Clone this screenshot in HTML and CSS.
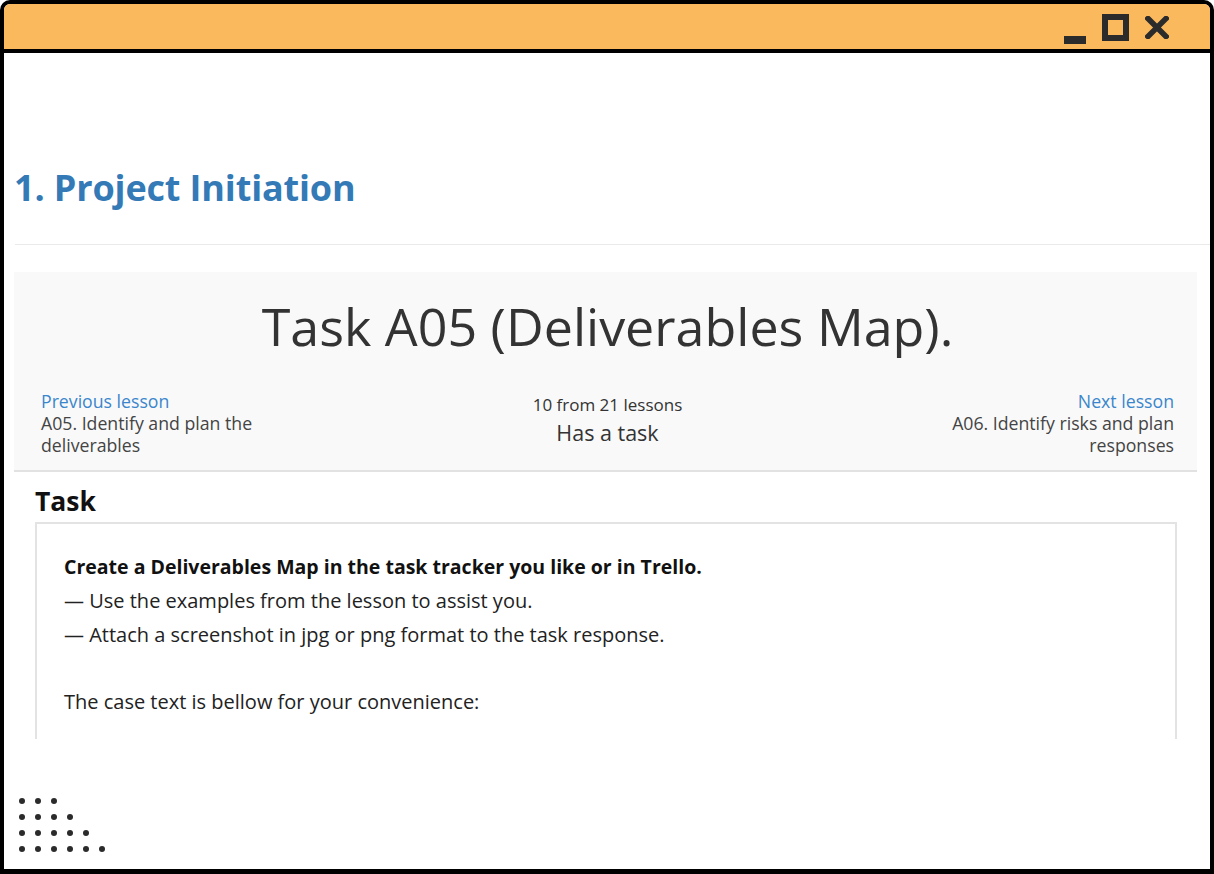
FILE: index.html
```html
<!DOCTYPE html>
<html>
<head>
<meta charset="utf-8">
<link rel="stylesheet" href="styles.css">
</head>
<body>
<div class="window">
  <div class="titlebar">
    <div class="controls">
      <span class="ctl-min"></span>
      <span class="ctl-max"></span>
      <svg class="ctl-close" width="24" height="23" viewBox="0 0 24 23"><path d="M3 2.5 L21 20.5 M21 2.5 L3 20.5" stroke="#2b2b2b" stroke-width="5.5" stroke-linecap="square"/></svg>
    </div>
  </div>
  <div class="content">
    <h1 class="module-title">1. Project Initiation</h1>
    <div class="divider"></div>
    <div class="lesson-panel">
      <h2 class="lesson-title">Task A05 (Deliverables Map).</h2>
      <div class="lesson-nav">
        <div class="nav-side nav-prev">
          <a class="nav-link">Previous lesson</a>
          <div class="nav-name">A05. Identify and plan the deliverables</div>
        </div>
        <div class="nav-center">
          <div class="nav-count">10 from 21 lessons</div>
          <div class="nav-has">Has a task</div>
        </div>
        <div class="nav-side nav-next">
          <a class="nav-link">Next lesson</a>
          <div class="nav-name">A06. Identify risks and plan responses</div>
        </div>
      </div>
    </div>
    <div class="task-section">
      <h3 class="task-heading">Task</h3>
      <div class="task-box">
        <p class="task-strong">Create a Deliverables Map in the task tracker you like or in Trello.</p>
        <p class="task-line">— Use the examples from the lesson to assist you.</p>
        <p class="task-line">— Attach a screenshot in jpg or png format to the task response.</p>
        <p class="task-line task-gap">The case text is bellow for your convenience:</p>
      </div>
    </div>
  </div>
  <div class="footer">
    <div class="dots">
      <div class="dot-row"><i></i><i></i><i></i></div>
      <div class="dot-row"><i></i><i></i><i></i><i></i></div>
      <div class="dot-row"><i></i><i></i><i></i><i></i><i></i></div>
      <div class="dot-row"><i></i><i></i><i></i><i></i><i></i><i></i></div>
    </div>
  </div>
</div>
</body>
</html>
```

FILE: styles.css
```css
* { box-sizing: border-box; }
html, body { margin: 0; padding: 0; background: #fff; }
body { font-family: "Open Sans", Lato, sans-serif; color: #333; }

.window {
  width: 1214px;
  height: 874px;
  border: 4px solid #000;
  border-bottom-width: 5px;
  border-radius: 10px 10px 0 0;
  display: flex;
  flex-direction: column;
  overflow: hidden;
}

.titlebar {
  height: 49px;
  flex: none;
  background: #fbb95d;
  border-bottom: 4px solid #000;
  display: flex;
  justify-content: flex-end;
  align-items: flex-start;
  padding-right: 41px;
}
.controls { display: flex; align-items: flex-start; margin-top: 10px; }
.ctl-min { display: block; width: 22px; height: 8px; background: #2b2b2b; margin-top: 22px; }
.ctl-max { display: block; width: 27px; height: 27px; border: 6px solid #2b2b2b; margin-left: 16px; }
.ctl-close { display: block; margin-left: 16px; margin-top: 2px; }

.content {
  height: 686px;
  flex: none;
  overflow: hidden;
  padding-left: 10px;
}

.module-title {
  margin: 0;
  padding-top: 112px;
  height: 191px;
  font-size: 36px;
  font-weight: 700;
  color: #337ab7;
  line-height: 46px;
  letter-spacing: -0.15px;
}
.divider { height: 1px; background: #eaeaea; margin-left: 1px; }

.lesson-panel {
  margin-top: 27px;
  margin-right: 13px;
  background: #f9f9f9;
  border-bottom: 2px solid #e2e2e2;
  padding: 18px 23px 14px 27px;
}
.lesson-title {
  margin: 0;
  text-align: center;
  font-size: 52px;
  font-weight: 400;
  line-height: 72px;
  color: #333;
}
.lesson-nav { display: flex; justify-content: space-between; margin-top: 28px; }
.nav-side { width: 260px; font-size: 17.7px; line-height: 22px; }
.nav-next { text-align: right; }
.nav-link { display: block; color: #3a86cc; }
.nav-name { color: #444; }
.nav-center { text-align: center; padding-top: 4px; }
.nav-count { font-size: 17px; line-height: 22px; color: #333; }
.nav-has { font-size: 21.5px; line-height: 30px; color: #333; margin-top: 2px; }

.task-section { padding: 13px 33px 0 21px; }
.task-heading { margin: 0; font-size: 26.5px; font-weight: 700; color: #111; line-height: 32px; }
.task-box {
  margin-top: 5px;
  border: 2px solid #e3e3e3;
  padding: 26px 27px 40px 27px;
  min-height: 300px;
}
.task-box p { margin: 0; font-size: 20px; line-height: 34px; color: #222; }
.task-box .task-strong { font-weight: 700; color: #111; font-size: 19.5px; }
.task-box .task-gap { margin-top: 33px; }

.footer { flex: 1; padding: 59px 0 0 15px; }
.dot-row { display: flex; gap: 10px; margin-bottom: 10px; }
.dot-row i { display: block; width: 6px; height: 6px; border-radius: 50%; background: #2b2b2b; }
```
